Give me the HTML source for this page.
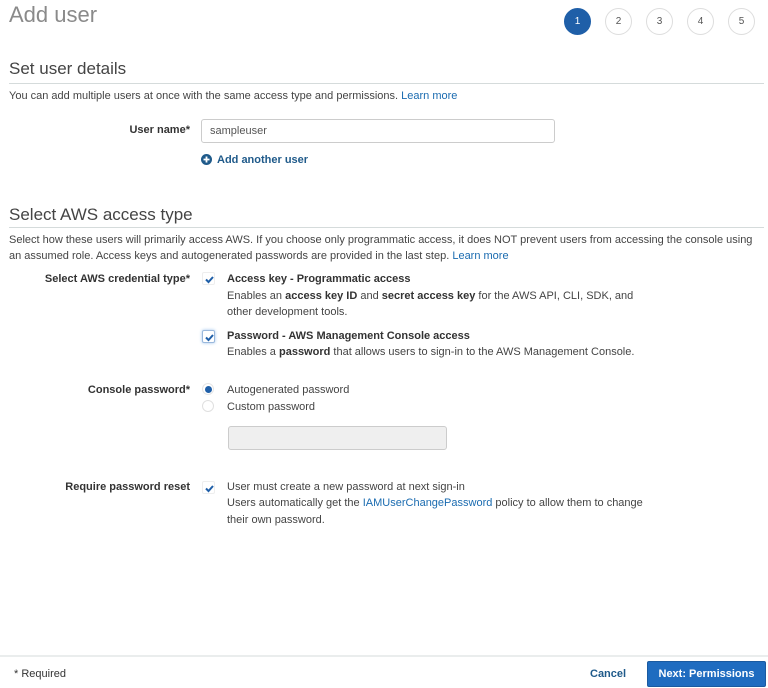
<!DOCTYPE html>
<html><head><meta charset="utf-8"><style>
*{margin:0;padding:0;box-sizing:border-box}
body{width:768px;height:688px;background:#fff;font-family:"Liberation Sans",Arial,sans-serif;color:#444;position:relative;overflow:hidden;font-size:11px}
.a{position:absolute;white-space:nowrap}
.h1{font-size:22px;color:#8a8a8a}
.h2{font-size:17px;color:#444}
.line{position:absolute;left:9px;right:4px;height:1px;background:#d5dbdb}
.c{position:absolute;width:27px;height:27px;border-radius:50%;border:1px solid #ddd;color:#555;font-size:10px;text-align:center;line-height:25px;top:8px}
.c.on{background:#1f5fa8;border-color:#1f5fa8;color:#fff}
.lbl{position:absolute;right:578px;font-weight:bold;color:#333;font-size:11px;white-space:nowrap}
.lk{color:#1a6bb0}
.cb{position:absolute;left:202px;width:13px;height:13px;border:1px solid #ddd;border-radius:2px;background:#fff}
.cb svg{position:absolute;left:0px;top:0px}
b{color:#333}
</style></head><body>
<div class="a h1" style="left:9px;top:2px">Add user</div>
<div class="c on" style="left:564px">1</div>
<div class="c" style="left:605px">2</div>
<div class="c" style="left:646px">3</div>
<div class="c" style="left:687px">4</div>
<div class="c" style="left:728px">5</div>

<div class="a h2" style="left:9px;top:59px">Set user details</div>
<div class="line" style="top:83px"></div>
<div class="a" style="left:9px;top:90px">You can add multiple users at once with the same access type and permissions. <span class="lk">Learn more</span></div>

<div class="lbl" style="top:124px">User name*</div>
<div style="position:absolute;left:201px;top:119px;width:354px;height:24px;border:1px solid #ccc;border-radius:3px"></div>
<div class="a" style="left:210px;top:125px;color:#555">sampleuser</div>
<svg style="position:absolute;left:201px;top:154px" width="11" height="11"><circle cx="5.5" cy="5.5" r="5.5" fill="#1f5a8a"/><path d="M5.5 2.5v6M2.5 5.5h6" stroke="#fff" stroke-width="1.8"/></svg>
<div class="a" style="left:217px;top:154px;font-weight:bold;color:#1f5a8a">Add another user</div>

<div class="a h2" style="left:9px;top:205px">Select AWS access type</div>
<div class="line" style="top:227px"></div>
<div class="a" style="left:9px;top:234px">Select how these users will primarily access AWS. If you choose only programmatic access, it does NOT prevent users from accessing the console using</div>
<div class="a" style="left:9px;top:250px">an assumed role. Access keys and autogenerated passwords are provided in the last step. <span class="lk">Learn more</span></div>

<div class="lbl" style="top:273px">Select AWS credential type*</div>
<div class="cb" style="top:272px;border-color:#eee"><svg width="13" height="13"><path d="M3 6.5l2.5 2.5 4.5-5" stroke="#1f5fa8" stroke-width="2" fill="none"/></svg></div>
<div class="a" style="left:227px;top:273px;font-weight:bold;color:#333">Access key - Programmatic access</div>
<div class="a" style="left:227px;top:290px">Enables an <b>access key ID</b> and <b>secret access key</b> for the AWS API, CLI, SDK, and</div>
<div class="a" style="left:227px;top:306px">other development tools.</div>
<div class="cb" style="top:330px;border-color:#9ab8dc;box-shadow:0 0 3px #9ec3ec"><svg width="13" height="13"><path d="M3 6.5l2.5 2.5 4.5-5" stroke="#1f5fa8" stroke-width="2" fill="none"/></svg></div>
<div class="a" style="left:227px;top:330px;font-weight:bold;color:#333">Password - AWS Management Console access</div>
<div class="a" style="left:227px;top:346px">Enables a <b>password</b> that allows users to sign-in to the AWS Management Console.</div>

<div class="lbl" style="top:384px">Console password*</div>
<div style="position:absolute;left:202px;top:383px;width:12px;height:12px;border-radius:50%;border:1px solid #e5e5e5"><div style="position:absolute;left:1.5px;top:1.5px;width:7px;height:7px;border-radius:50%;background:#1f5fa8"></div></div>
<div class="a" style="left:227px;top:384px">Autogenerated password</div>
<div style="position:absolute;left:202px;top:400px;width:12px;height:12px;border-radius:50%;border:1px solid #e0e0e0"></div>
<div class="a" style="left:227px;top:401px">Custom password</div>
<div style="position:absolute;left:228px;top:426px;width:219px;height:24px;border:1px solid #ccc;border-radius:3px;background:#efefef"></div>

<div class="lbl" style="top:481px">Require password reset</div>
<div class="cb" style="top:481px;border-color:#eee"><svg width="13" height="13"><path d="M3 6.5l2.5 2.5 4.5-5" stroke="#1f5fa8" stroke-width="2" fill="none"/></svg></div>
<div class="a" style="left:227px;top:481px">User must create a new password at next sign-in</div>
<div class="a" style="left:227px;top:497px">Users automatically get the <span class="lk">IAMUserChangePassword</span> policy to allow them to change</div>
<div class="a" style="left:227px;top:514px">their own password.</div>

<div style="position:absolute;left:0;right:0;top:655px;height:2px;background:#eaeded"></div>
<div class="a" style="left:14px;top:668px;color:#333">* Required</div>
<div class="a" style="left:590px;top:668px;font-weight:bold;color:#1f5a8a">Cancel</div>
<div style="position:absolute;left:647px;top:661px;width:119px;height:26px;background:#1f6cc0;border:1px solid #1a5aa0;border-radius:2px;color:#fff;font-weight:bold;text-align:center;line-height:24px">Next: Permissions</div>
</body></html>
